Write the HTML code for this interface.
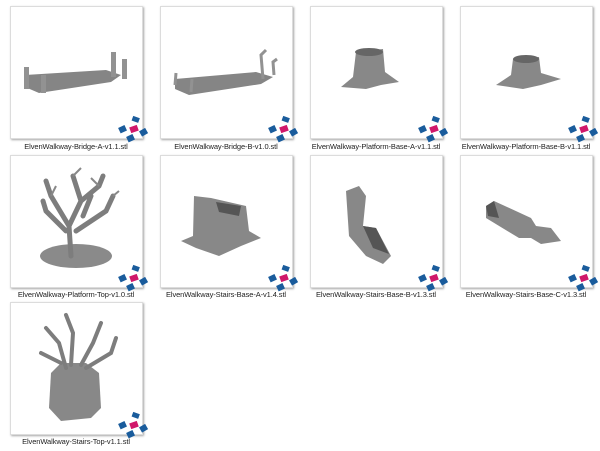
<!DOCTYPE html>
<html><head><meta charset="utf-8"><style>
body{margin:0;width:600px;height:451px;background:#fff;position:relative;overflow:hidden;font-family:"Liberation Sans",sans-serif}
.t{position:absolute;width:131px;height:131px;background:#fff;border:1px solid #dcdcdc;box-shadow:1px 1px 2px rgba(0,0,0,.35)}
.t svg{position:absolute;left:0;top:0;overflow:visible}
.l{position:absolute;width:150px;text-align:center;font-size:7.5px;color:#222;white-space:nowrap;letter-spacing:-0.1px}
</style></head><body>
<svg width="0" height="0" style="position:absolute"><defs>
<g id="logo">
<rect x="-4" y="-3" width="7" height="6" fill="#1a5c9c" transform="translate(112,122) rotate(-25)"/>
<rect x="-4" y="-3" width="7" height="5" fill="#1a5c9c" transform="translate(125,113) rotate(20)"/>
<rect x="-4" y="-3" width="7" height="6" fill="#1a5c9c" transform="translate(133,125) rotate(-30)"/>
<rect x="-4" y="-3" width="7" height="6" fill="#1a5c9c" transform="translate(120,131) rotate(-25)"/>
<rect x="-4" y="-3" width="8" height="6" fill="#d0186b" transform="translate(123,122) rotate(-20)"/>
</g></defs></svg>

<!-- Row 1 -->
<div class="t" style="left:10px;top:6px"><svg width="131" height="131">
<polygon points="14,68 95,63 110,68 100,75 28,86 14,80" fill="#858585"/>
<rect x="13" y="60" width="5" height="22" fill="#929292"/><rect x="30" y="68" width="5" height="18" fill="#929292"/>
<rect x="100" y="45" width="5" height="25" fill="#929292"/><rect x="111" y="52" width="5" height="20" fill="#929292"/>
<use href="#logo"/></svg></div>
<div class="l" style="left:1px;top:142px">ElvenWalkway-Bridge-A-v1.1.stl</div>

<div class="t" style="left:160px;top:6px"><svg width="131" height="131">
<polygon points="14,72 95,65 112,70 100,77 28,88 14,82" fill="#858585"/>
<path d="M14,78 L15,66 M30,85 L31,72 M102,72 L100,48 L105,43 M113,68 L112,55 L116,52" stroke="#929292" stroke-width="3" fill="none"/>
<use href="#logo"/></svg></div>
<div class="l" style="left:151px;top:142px">ElvenWalkway-Bridge-B-v1.0.stl</div>

<div class="t" style="left:310px;top:6px"><svg width="131" height="131">
<polygon points="45,45 72,42 74,65 88,75 70,78 55,82 30,80 42,70" fill="#888"/>
<ellipse cx="58" cy="45" rx="14" ry="4" fill="#666"/>
<use href="#logo"/></svg></div>
<div class="l" style="left:301px;top:142px">ElvenWalkway-Platform-Base-A-v1.1.stl</div>

<div class="t" style="left:460px;top:6px"><svg width="131" height="131">
<polygon points="52,52 78,50 80,66 100,72 80,78 62,82 35,78 50,68" fill="#888"/>
<ellipse cx="65" cy="52" rx="13" ry="4" fill="#666"/>
<use href="#logo"/></svg></div>
<div class="l" style="left:451px;top:142px">ElvenWalkway-Platform-Base-B-v1.1.stl</div>

<!-- Row 2 -->
<div class="t" style="left:10px;top:155px"><svg width="131" height="131">
<ellipse cx="65" cy="100" rx="36" ry="12" fill="#8a8a8a"/>
<path d="M60,100 L58,70 L40,40 L35,25 M58,70 L70,45 L62,20 M70,45 L88,30 L92,20 M65,75 L95,55 L102,40 M55,75 L35,55 L32,45 M72,60 L80,40" stroke="#7d7d7d" stroke-width="5" fill="none" stroke-linecap="round"/>
<path d="M40,40 L45,30 M62,20 L70,12 M88,30 L80,22 M102,40 L108,35" stroke="#888" stroke-width="2" fill="none"/>
<use href="#logo"/></svg></div>
<div class="l" style="left:1px;top:290px">ElvenWalkway-Platform-Top-v1.0.stl</div>

<div class="t" style="left:160px;top:155px"><svg width="131" height="131">
<polygon points="33,40 50,42 85,50 88,75 100,82 80,90 58,100 35,92 20,85 32,80" fill="#888"/>
<polygon points="55,46 80,50 78,60 58,56" fill="#555"/>
<use href="#logo"/></svg></div>
<div class="l" style="left:151px;top:290px">ElvenWalkway-Stairs-Base-A-v1.4.stl</div>

<div class="t" style="left:310px;top:155px"><svg width="131" height="131">
<polygon points="35,35 48,30 55,40 52,70 65,72 80,100 72,108 55,100 38,80" fill="#888"/>
<polygon points="52,70 65,72 78,98 62,92" fill="#555"/>
<use href="#logo"/></svg></div>
<div class="l" style="left:301px;top:290px">ElvenWalkway-Stairs-Base-B-v1.3.stl</div>

<div class="t" style="left:460px;top:155px"><svg width="131" height="131">
<polygon points="25,50 33,45 70,62 75,70 90,72 100,85 80,88 70,82 58,82 25,62" fill="#888"/>
<polygon points="25,50 33,45 38,62 27,60" fill="#555"/>
<use href="#logo"/></svg></div>
<div class="l" style="left:451px;top:290px">ElvenWalkway-Stairs-Base-C-v1.3.stl</div>

<!-- Row 3 -->
<div class="t" style="left:10px;top:302px"><svg width="131" height="131">
<polygon points="40,70 50,60 75,60 88,70 90,105 80,115 50,118 38,105" fill="#888"/>
<path d="M55,65 L48,40 L35,25 M60,62 L62,30 L55,12 M70,62 L82,40 L90,20 M75,65 L100,50 L105,35 M50,60 L30,50" stroke="#7d7d7d" stroke-width="4" fill="none" stroke-linecap="round"/>
<use href="#logo"/></svg></div>
<div class="l" style="left:1px;top:437px">ElvenWalkway-Stairs-Top-v1.1.stl</div>
</body></html>
